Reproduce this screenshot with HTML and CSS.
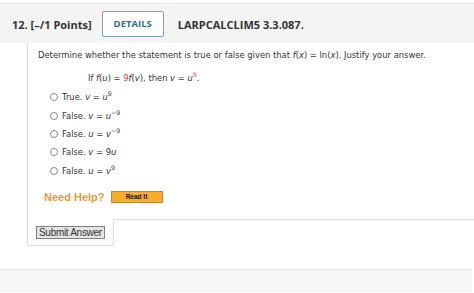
FILE: index.html
```html
<!DOCTYPE html>
<html lang="en">
<head>
    <meta charset="UTF-8">
    <meta name="viewport" content="width=device-width, initial-scale=1.0">
    <title>Question 12</title>
    <link rel="stylesheet" href="styles.css">
</head>
<body>
    <div class="page">
        <div class="qhead">
            <span class="qnum">12. [&ndash;/1 Points]</span>
            <span class="details">DETAILS</span>
            <span class="qref">LARPCALCLIM5 3.3.087.</span>
        </div>

        <div class="qbody">
            <p class="prompt">Determine whether the statement is true or false given that <i>f</i>(<i>x</i>) = ln(<i>x</i>). Justify your answer.</p>
            <p class="statement">If <i>f</i>(<i>u</i>) = <span class="red">9</span><i>f</i>(<i>v</i>), then <i>v</i> = <i>u</i><sup class="red">9</sup>.</p>

            <ul class="choices">
                <li><span class="radio"></span><span>True. <i>v</i> = <i>u</i><sup>9</sup></span></li>
                <li><span class="radio"></span><span>False. <i>v</i> = <i>u</i><sup>&minus;9</sup></span></li>
                <li><span class="radio"></span><span>False. <i>u</i> = <i>v</i><sup>&minus;9</sup></span></li>
                <li><span class="radio"></span><span>False. <i>v</i> = 9<i>u</i></span></li>
                <li><span class="radio"></span><span>False. <i>u</i> = <i>v</i><sup>9</sup></span></li>
            </ul>

            <div class="help">
                <span class="help-label">Need Help?</span>
                <span class="read-it">Read It</span>
            </div>
        </div>

        <div class="qfoot">
            <div class="submit-tab">
                <button type="button" class="submit">Submit Answer</button>
            </div>
            <div class="filler"></div>
        </div>

        <div class="next-bar"></div>
    </div>
</body>
</html>
```

FILE: styles.css
```css
body {
    margin: 0;
    background-color: white;
    font-family: "DejaVu Sans", Verdana, sans-serif;
    color: #333;
}
.page {
    padding-top: 3px;
}
.qhead {
    display: flex;
    align-items: center;
    height: 38px;
    padding: 1px 0 0 12px;
    background-color: #f4f4f4;
    border-top: 1px solid #e9e9e9;
    font-family: "Open Sans", sans-serif;
    font-weight: bold;
    font-size: 11px;
    color: #333;
}
.details {
    margin-left: 10px;
    padding: 0 11px;
    height: 24px;
    line-height: 24px;
    background-color: white;
    border: 1px solid #7ea5b8;
    border-radius: 2px;
    font-size: 9.5px;
    color: #2f6d8d;
}
.qref {
    margin-left: 14px;
}
.qbody {
    margin-left: 27px;
    padding: 5px 0 16px 10px;
    border-left: 1px solid #dcdcdc;
    font-size: 8.4px;
}
.prompt {
    margin: 0;
    height: 14px;
    line-height: 14px;
}
.statement {
    margin: 9px 0 0 50px;
    height: 14px;
    line-height: 14px;
}
.red {
    color: #d43b3b;
}
sup {
    font-size: 75%;
    line-height: 0;
}
.choices {
    list-style: none;
    margin: 0;
    padding: 3px 0 0 12px;
}
.choices li {
    display: flex;
    align-items: center;
    height: 18.4px;
}
.radio {
    width: 6px;
    height: 6px;
    margin-right: 4px;
    border: 1px solid #888;
    border-radius: 50%;
    background-color: white;
}
.help {
    display: flex;
    align-items: center;
    margin-top: 11px;
    padding-left: 6px;
}
.help-label {
    font-family: "Liberation Sans", Arial, sans-serif;
    font-weight: bold;
    font-size: 11px;
    color: #e89a3c;
}
.read-it {
    margin-left: 6px;
    width: 50px;
    height: 10px;
    line-height: 10px;
    text-align: center;
    background-color: #f8ac2c;
    border: 1px solid #d0862a;
    font-family: "Liberation Sans", Arial, sans-serif;
    font-weight: bold;
    font-size: 6.5px;
    color: #111;
}
.qfoot {
    display: flex;
    margin-left: 27px;
}
.submit-tab {
    padding: 7px 8px 6px 8px;
    border: 1px solid #dcdcdc;
    border-top: none;
    border-radius: 0 0 3px 3px;
}
.filler {
    flex: 1;
    border-top: 1px solid #dcdcdc;
}
.submit {
    display: block;
    height: 13px;
    padding: 0 2px;
    background-color: #e4e4e4;
    border: 1px solid #808080;
    border-radius: 0;
    font-family: "Liberation Sans", Arial, sans-serif;
    font-size: 10px;
    letter-spacing: -0.3px;
    line-height: 11px;
    color: #333;
}
.next-bar {
    margin-top: 23px;
    margin-right: 2px;
    height: 22px;
    background-color: #f6f6f6;
    border-top: 1px solid #e4e4e4;
}
```
